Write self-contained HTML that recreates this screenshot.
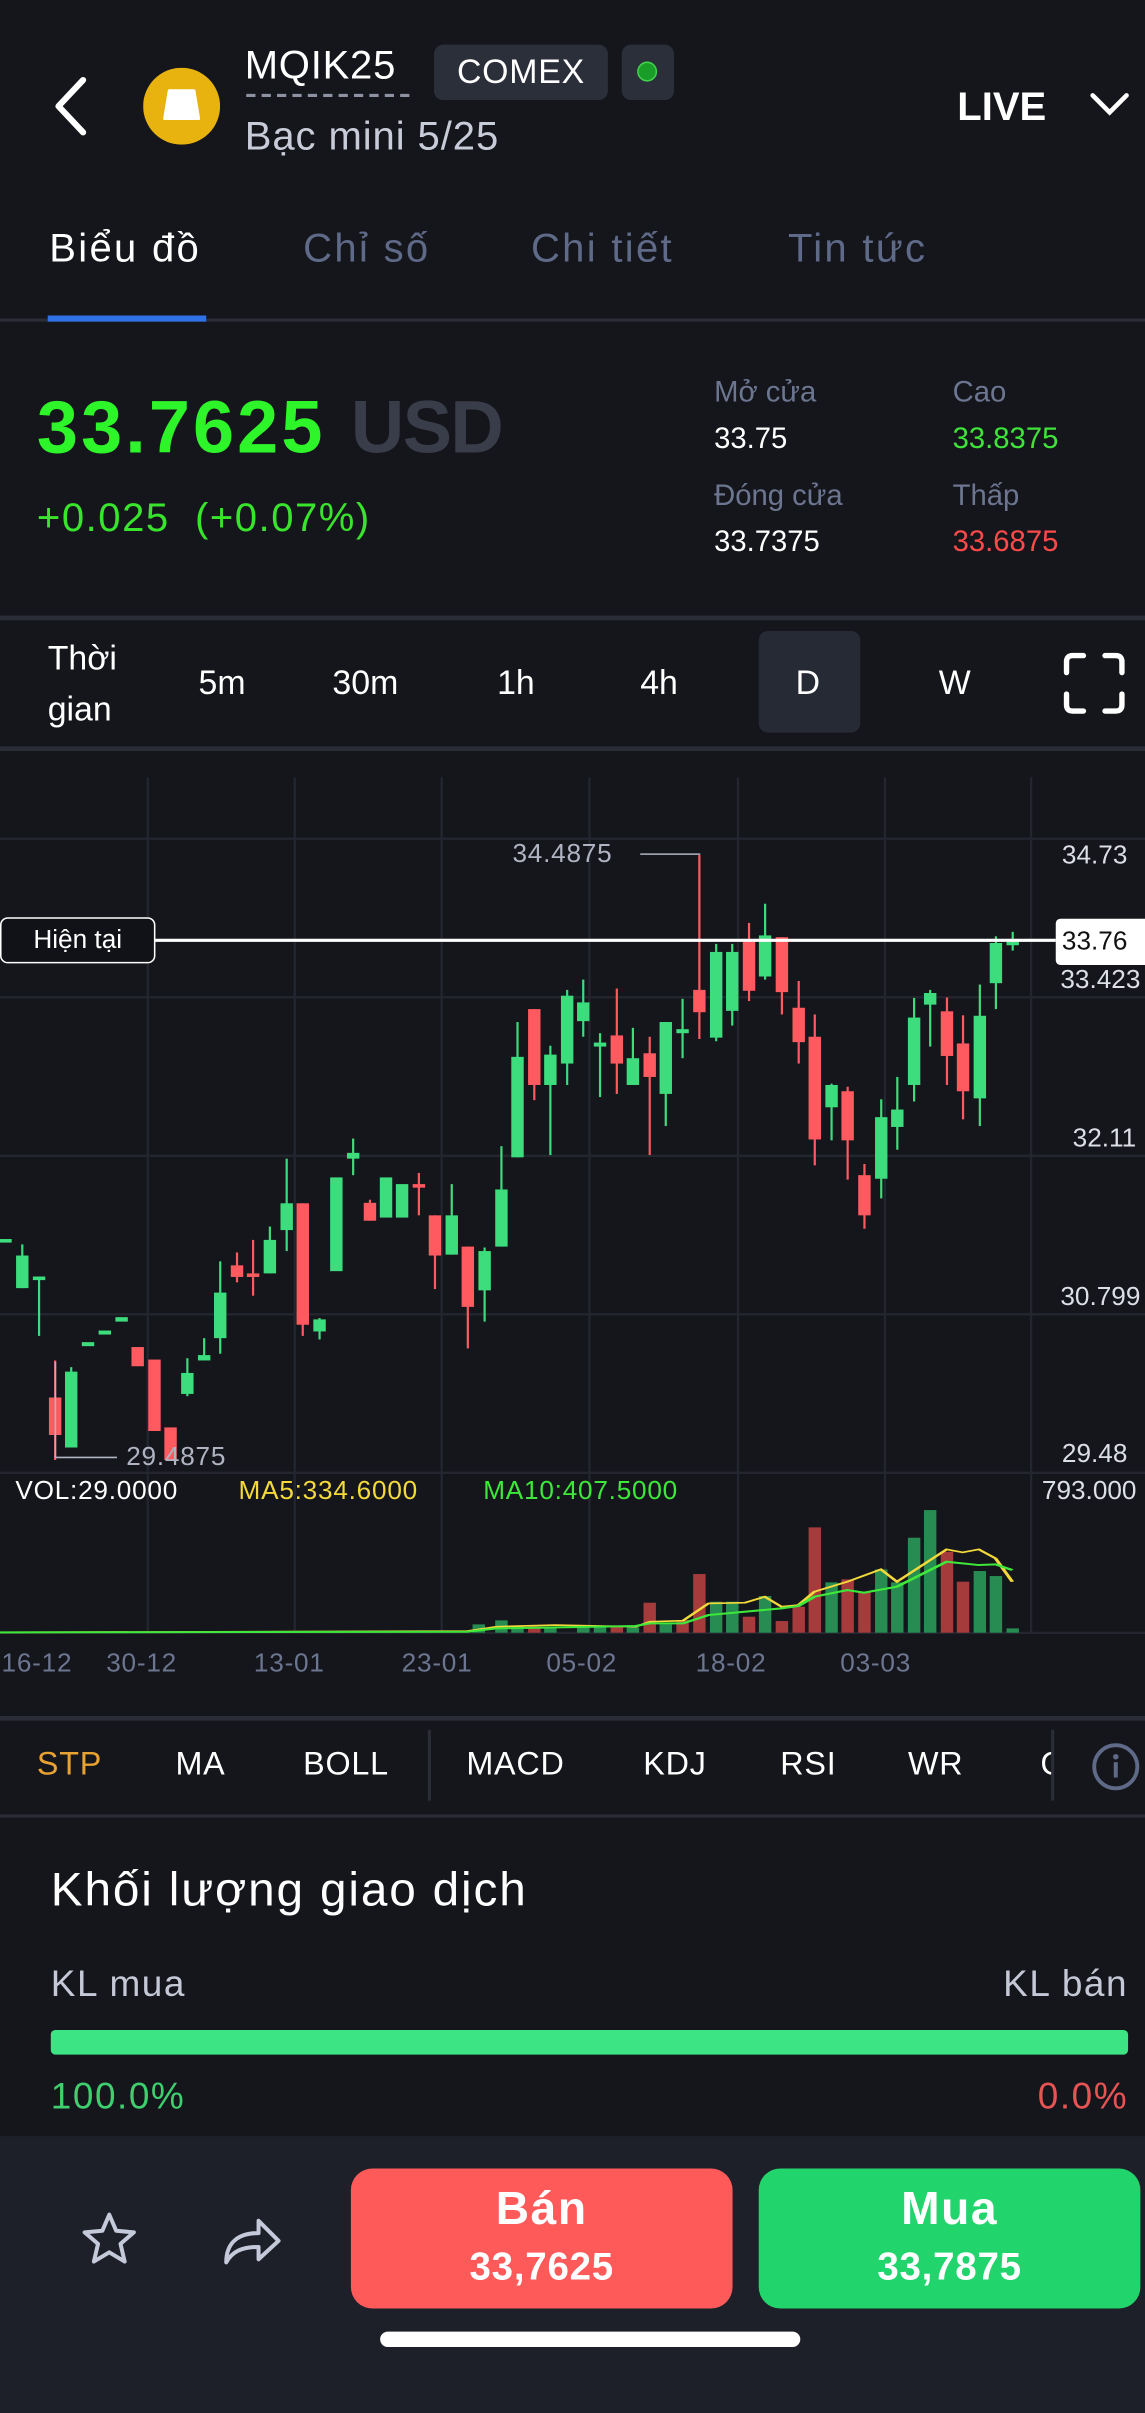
<!DOCTYPE html>
<html><head><meta charset="utf-8">
<style>
html,body{margin:0;padding:0;background:#15161c;width:1145px;height:2413px;overflow:hidden}
#p{position:absolute;left:0;top:0;width:744px;height:1568px;transform:scale(1.539);transform-origin:0 0;background:#15161c;font-family:"Liberation Sans",sans-serif;color:#fff}
.a{position:absolute;white-space:nowrap}
.hl{position:absolute;left:0;width:744px;background:#2a2d36}
.tf{position:absolute;top:431px;font-size:22px;color:#fff}
.ind{position:absolute;top:1135px;font-size:21px;color:#fff;letter-spacing:0.5px}
.pl{position:absolute;font-size:17px;color:#dcdfe6;left:690px}
.dt{position:absolute;top:1071px;font-size:17px;color:#6c7690;letter-spacing:0.5px}
.tab{position:absolute;top:146px;font-size:26px;letter-spacing:1.5px;color:#5e6a87}
</style></head><body><div id="p">

<!-- header -->
<svg class="a" style="left:30px;top:48px" width="32" height="42"><path d="M24 4 L8 21 L24 38" stroke="#fff" stroke-width="4" fill="none" stroke-linecap="round" stroke-linejoin="round"/></svg>
<svg class="a" style="left:93px;top:44px" width="50" height="50"><circle cx="25" cy="25" r="25" fill="#e8b30f"/><path d="M17 15 H33 L36 33 H14 Z" fill="#fff" stroke="#fff" stroke-width="2" stroke-linejoin="round"/></svg>
<div class="a" style="left:159px;top:27px;font-size:26px;letter-spacing:0.5px">MQIK25</div>
<div class="a" style="left:160px;top:61px;width:106px;border-top:2px dashed #8d92a3"></div>
<div class="a" style="left:282px;top:29px;width:113px;height:36px;background:#2b2f3a;border-radius:6px;font-size:22px;line-height:36px;text-align:center;letter-spacing:0.5px">COMEX</div>
<div class="a" style="left:404px;top:29px;width:34px;height:36px;background:#2b2f3a;border-radius:6px"><div style="position:absolute;left:10px;top:11px;width:11px;height:11px;border-radius:50%;background:#1a9d28;border:1.5px solid #3fd24a"></div></div>
<div class="a" style="left:159px;top:73px;font-size:26px;color:#c8cbd8;letter-spacing:0.6px">Bạc mini 5/25</div>
<div class="a" style="left:622px;top:54px;font-size:26px;font-weight:bold">LIVE</div>
<svg class="a" style="left:707px;top:58px" width="30" height="20"><path d="M3 4 L14 15 L25 4" stroke="#fff" stroke-width="3" fill="none" stroke-linecap="round"/></svg>

<!-- tabs -->
<div class="tab" style="left:32px;color:#fff">Biểu đồ</div>
<div class="tab" style="left:197px">Chỉ số</div>
<div class="tab" style="left:345px">Chi tiết</div>
<div class="tab" style="left:512px">Tin tức</div>
<div class="hl" style="top:207px;height:2px"></div>
<div class="a" style="left:31px;top:205px;width:103px;height:4px;background:#2f72e6"></div>

<!-- price -->
<div class="a" style="left:24px;top:251px;font-size:48px;font-weight:bold;color:#2ef52a;letter-spacing:2px">33.7625</div>
<div class="a" style="left:228px;top:251px;font-size:48px;font-weight:bold;color:#393c49;letter-spacing:-1px">USD</div>
<div class="a" style="left:24px;top:321px;font-size:26px;color:#38e42c;letter-spacing:1px">+0.025 &nbsp;(+0.07%)</div>
<div class="a" style="left:464px;top:245px;font-size:19px;color:#6c7690">Mở cửa</div>
<div class="a" style="left:464px;top:275px;font-size:19px">33.75</div>
<div class="a" style="left:619px;top:245px;font-size:19px;color:#6c7690">Cao</div>
<div class="a" style="left:619px;top:275px;font-size:19px;color:#3ee43a">33.8375</div>
<div class="a" style="left:464px;top:312px;font-size:19px;color:#6c7690">Đóng cửa</div>
<div class="a" style="left:464px;top:342px;font-size:19px">33.7375</div>
<div class="a" style="left:619px;top:312px;font-size:19px;color:#6c7690">Thấp</div>
<div class="a" style="left:619px;top:342px;font-size:19px;color:#ff4a4a">33.6875</div>
<div class="hl" style="top:400px;height:3px"></div>

<!-- timeframe -->
<div class="a" style="left:31px;top:411px;font-size:22px;line-height:33px">Thời<br>gian</div>
<div class="tf" style="left:129px">5m</div>
<div class="tf" style="left:216px">30m</div>
<div class="tf" style="left:323px">1h</div>
<div class="tf" style="left:416px">4h</div>
<div class="a" style="left:493px;top:410px;width:66px;height:66px;background:#262a35;border-radius:6px"></div>
<div class="tf" style="left:517px">D</div>
<div class="tf" style="left:610px">W</div>
<svg class="a" style="left:690px;top:423px" width="42" height="42"><path d="M3 14 V7 Q3 3 7 3 H14 M28 3 H35 Q39 3 39 7 V14 M39 28 V35 Q39 39 35 39 H28 M14 39 H7 Q3 39 3 35 V28" stroke="#fff" stroke-width="3.5" fill="none" stroke-linecap="round"/></svg>
<div class="hl" style="top:485px;height:3px"></div>

<!-- chart -->
<svg class="a" style="left:0;top:0" width="744" height="1120">
<g stroke="#23262f" stroke-width="1.5">
<line x1="96" y1="505" x2="96" y2="1061"/><line x1="191.5" y1="505" x2="191.5" y2="1061"/><line x1="287" y1="505" x2="287" y2="1061"/><line x1="383" y1="505" x2="383" y2="1061"/><line x1="479.5" y1="505" x2="479.5" y2="1061"/><line x1="575" y1="505" x2="575" y2="1061"/><line x1="670" y1="505" x2="670" y2="1061"/>
<line x1="0" y1="545" x2="744" y2="545"/><line x1="0" y1="648" x2="744" y2="648"/><line x1="0" y1="751" x2="744" y2="751"/><line x1="0" y1="854" x2="744" y2="854"/><line x1="0" y1="957" x2="744" y2="957"/><line x1="0" y1="1061" x2="744" y2="1061"/>
</g>
<g transform="matrix(0.4746,0,0,0.2901,0,493.8)">
<g fill="#3ddc7c">
<rect x="0" y="1073" width="16" height="8"/>
<rect x="29" y="1085" width="3" height="98"/><rect x="22" y="1110" width="17" height="73"/>
<rect x="52" y="1158" width="3" height="132"/><rect x="45" y="1157" width="17" height="8"/>
<rect x="96" y="1360" width="3" height="180"/><rect x="89" y="1370" width="17" height="170"/>
<rect x="112" y="1304" width="17" height="9"/><rect x="135" y="1278" width="17" height="9"/><rect x="158" y="1248" width="17" height="10"/>
<rect x="255" y="1340" width="3" height="85"/><rect x="248" y="1373" width="17" height="47"/>
<rect x="278" y="1295" width="3" height="50"/><rect x="271" y="1333" width="17" height="12"/>
<rect x="300" y="1123" width="3" height="207"/><rect x="293" y="1193" width="17" height="102"/>
<rect x="368" y="1045" width="3" height="105"/><rect x="361" y="1075" width="17" height="75"/>
<rect x="391" y="893" width="3" height="207"/><rect x="384" y="993" width="17" height="60"/>
<rect x="436" y="1250" width="3" height="48"/><rect x="429" y="1253" width="17" height="27"/>
<rect x="452" y="935" width="17" height="210"/>
<rect x="482" y="848" width="3" height="82"/><rect x="475" y="880" width="17" height="13"/>
<rect x="520" y="935" width="17" height="90"/><rect x="542" y="950" width="17" height="75"/>
<rect x="617" y="950" width="3" height="158"/><rect x="610" y="1020" width="17" height="88"/>
<rect x="662" y="1092" width="3" height="166"/><rect x="655" y="1100" width="17" height="88"/>
<rect x="685" y="865" width="3" height="225"/><rect x="678" y="962" width="17" height="128"/>
<rect x="707" y="587" width="3" height="303"/><rect x="700" y="665" width="17" height="225"/>
<rect x="752" y="640" width="3" height="245"/><rect x="745" y="660" width="17" height="68"/>
<rect x="775" y="515" width="3" height="213"/><rect x="768" y="528" width="17" height="152"/>
<rect x="797" y="492" width="3" height="128"/><rect x="790" y="543" width="17" height="42"/>
<rect x="820" y="612" width="3" height="143"/><rect x="813" y="633" width="17" height="9"/>
<rect x="865" y="600" width="3" height="128"/><rect x="858" y="668" width="17" height="60"/>
<rect x="910" y="587" width="3" height="233"/><rect x="903" y="587" width="17" height="161"/>
<rect x="933" y="535" width="3" height="133"/><rect x="926" y="603" width="17" height="9"/>
<rect x="979" y="412" width="3" height="218"/><rect x="972" y="430" width="17" height="192"/>
<rect x="1001" y="412" width="3" height="183"/><rect x="994" y="430" width="17" height="132"/>
<rect x="1046" y="322" width="3" height="170"/><rect x="1039" y="393" width="17" height="92"/>
<rect x="1137" y="725" width="3" height="127"/><rect x="1130" y="728" width="17" height="50"/>
<rect x="1205" y="760" width="3" height="222"/><rect x="1198" y="800" width="17" height="138"/>
<rect x="1227" y="710" width="3" height="163"/><rect x="1220" y="783" width="17" height="39"/>
<rect x="1250" y="533" width="3" height="232"/><rect x="1243" y="577" width="17" height="151"/>
<rect x="1272" y="515" width="3" height="127"/><rect x="1265" y="522" width="17" height="26"/>
<rect x="1340" y="503" width="3" height="317"/><rect x="1333" y="573" width="17" height="185"/>
<rect x="1362" y="395" width="3" height="163"/><rect x="1355" y="410" width="17" height="90"/>
<rect x="1385" y="385" width="3" height="42"/><rect x="1378" y="407" width="17" height="8"/>
</g>
<g fill="#ff5a5f">
<rect x="74" y="1345" width="3" height="223"/><rect x="67" y="1428" width="17" height="84"/>
<rect x="180" y="1315" width="17" height="43"/>
<rect x="203" y="1343" width="17" height="160"/>
<rect x="225" y="1495" width="17" height="73"/>
<rect x="323" y="1103" width="3" height="67"/><rect x="316" y="1132" width="17" height="26"/>
<rect x="345" y="1075" width="3" height="125"/><rect x="338" y="1150" width="17" height="8"/>
<rect x="413" y="993" width="3" height="297"/><rect x="406" y="993" width="17" height="272"/>
<rect x="505" y="985" width="3" height="47"/><rect x="498" y="992" width="17" height="40"/>
<rect x="572" y="925" width="3" height="95"/><rect x="565" y="950" width="17" height="8"/>
<rect x="594" y="1020" width="3" height="165"/><rect x="587" y="1020" width="17" height="90"/>
<rect x="639" y="1090" width="3" height="228"/><rect x="632" y="1090" width="17" height="135"/>
<rect x="730" y="558" width="3" height="204"/><rect x="723" y="558" width="17" height="170"/>
<rect x="843" y="512" width="3" height="236"/><rect x="836" y="617" width="17" height="63"/>
<rect x="888" y="620" width="3" height="265"/><rect x="881" y="657" width="17" height="53"/>
<rect x="956" y="213" width="3" height="412"/><rect x="949" y="515" width="17" height="50"/>
<rect x="1024" y="365" width="3" height="175"/><rect x="1017" y="405" width="17" height="112"/>
<rect x="1069" y="397" width="3" height="173"/><rect x="1062" y="397" width="17" height="123"/>
<rect x="1092" y="495" width="3" height="185"/><rect x="1085" y="555" width="17" height="77"/>
<rect x="1114" y="570" width="3" height="338"/><rect x="1107" y="620" width="17" height="230"/>
<rect x="1159" y="732" width="3" height="208"/><rect x="1152" y="742" width="17" height="110"/>
<rect x="1182" y="905" width="3" height="145"/><rect x="1175" y="930" width="17" height="90"/>
<rect x="1295" y="532" width="3" height="196"/><rect x="1288" y="563" width="17" height="100"/>
<rect x="1317" y="572" width="3" height="233"/><rect x="1310" y="635" width="17" height="107"/>
</g>
</g>
<!-- volume -->
<g transform="matrix(0.4746,0,0,0.2166,0,935.7)">
<g fill="#268c51">
<rect x="647" y="553" width="17" height="25"/><rect x="678" y="541" width="17" height="37"/><rect x="700" y="558" width="17" height="20"/><rect x="745" y="560" width="17" height="18"/><rect x="790" y="562" width="17" height="16"/><rect x="813" y="562" width="17" height="16"/><rect x="858" y="562" width="17" height="16"/><rect x="903" y="553" width="17" height="25"/><rect x="972" y="485" width="17" height="93"/><rect x="994" y="485" width="17" height="93"/><rect x="1039" y="468" width="17" height="110"/><rect x="1130" y="427" width="17" height="151"/><rect x="1198" y="388" width="17" height="190"/><rect x="1220" y="427" width="17" height="151"/><rect x="1243" y="293" width="17" height="285"/><rect x="1265" y="210" width="17" height="368"/><rect x="1333" y="393" width="17" height="185"/><rect x="1355" y="408" width="17" height="170"/><rect x="1378" y="565" width="17" height="13"/>
</g>
<g fill="#a63b3c">
<rect x="723" y="560" width="17" height="18"/><rect x="836" y="560" width="17" height="18"/><rect x="881" y="488" width="17" height="90"/><rect x="926" y="540" width="17" height="38"/><rect x="949" y="402" width="17" height="176"/><rect x="1017" y="530" width="17" height="48"/><rect x="1062" y="543" width="17" height="35"/><rect x="1085" y="500" width="17" height="78"/><rect x="1107" y="262" width="17" height="316"/><rect x="1152" y="418" width="17" height="160"/><rect x="1175" y="455" width="17" height="123"/><rect x="1288" y="335" width="17" height="243"/><rect x="1310" y="425" width="17" height="153"/>
</g>
<polyline fill="none" stroke="#f3d93a" stroke-width="5" points="0,577 640,573 680,560 760,555 870,560 890,545 935,542 970,490 1020,488 1047,470 1070,500 1093,495 1115,455 1160,425 1206,388 1228,425 1296,328 1318,337 1340,328 1363,355 1386,425"/>
<polyline fill="none" stroke="#3ee83a" stroke-width="6" points="0,577 640,575 680,565 870,558 890,550 935,550 970,525 1070,505 1093,498 1115,470 1160,450 1183,458 1228,440 1296,365 1340,375 1363,373 1386,390"/>
</g>
<polyline points="416,555 455,555" stroke="#b0b4c2" stroke-width="1" fill="none"/>
<polyline points="36,885 36,947 76,947" stroke="#b0b4c2" stroke-width="1" fill="none"/>
<line x1="101" y1="611" x2="686" y2="611" stroke="#fff" stroke-width="2"/>
</svg>
<div class="a" style="left:333px;top:545px;font-size:17px;color:#b0b4c2;letter-spacing:0.5px">34.4875</div>
<div class="a" style="left:82px;top:937px;font-size:17px;color:#b0b4c2;letter-spacing:0.5px">29.4875</div>
<div class="a" style="left:0;top:596px;width:99px;height:28px;border:1.5px solid #fff;border-radius:5px;background:#111217;font-size:17px;line-height:28px;text-align:center">Hiện tại</div>
<div class="pl" style="top:546px">34.73</div>
<div class="a" style="left:686px;top:597px;width:62px;height:30px;background:#fff;border-radius:3px;color:#111;font-size:17px;line-height:30px;padding-left:4px">33.76</div>
<div class="pl" style="top:627px;left:689px">33.423</div>
<div class="pl" style="top:730px;left:697px">32.11</div>
<div class="pl" style="top:833px;left:689px">30.799</div>
<div class="pl" style="top:935px">29.48</div>
<div class="pl" style="top:959px;left:677px">793.000</div>
<div class="a" style="left:10px;top:959px;font-size:17px;color:#fff;letter-spacing:0.5px">VOL:29.0000</div>
<div class="a" style="left:155px;top:959px;font-size:17px;color:#f3d93a;letter-spacing:0.5px">MA5:334.6000</div>
<div class="a" style="left:314px;top:959px;font-size:17px;color:#3ee83a;letter-spacing:0.5px">MA10:407.5000</div>
<div class="dt" style="left:1px">16-12</div>
<div class="dt" style="left:69px">30-12</div>
<div class="dt" style="left:165px">13-01</div>
<div class="dt" style="left:261px">23-01</div>
<div class="dt" style="left:355px">05-02</div>
<div class="dt" style="left:452px">18-02</div>
<div class="dt" style="left:546px">03-03</div>
<div class="hl" style="top:1115px;height:3px"></div>

<!-- indicators -->
<div class="ind" style="left:24px;color:#e8a232">STP</div>
<div class="ind" style="left:114px">MA</div>
<div class="ind" style="left:197px">BOLL</div>
<div class="a" style="left:278px;top:1124px;width:2px;height:46px;background:#2a2d36"></div>
<div class="ind" style="left:303px">MACD</div>
<div class="ind" style="left:418px">KDJ</div>
<div class="ind" style="left:507px">RSI</div>
<div class="ind" style="left:590px">WR</div>
<div class="a" style="left:676px;top:1135px;width:8px;overflow:hidden;font-size:21px">C</div>
<div class="a" style="left:683px;top:1124px;width:2px;height:46px;background:#2a2d36"></div>
<svg class="a" style="left:709px;top:1131px" width="34" height="34"><circle cx="16" cy="17" r="14" stroke="#5e6a87" stroke-width="2.5" fill="none"/><circle cx="16" cy="10.5" r="1.8" fill="#5e6a87"/><rect x="14.7" y="14" width="2.6" height="10" fill="#5e6a87"/></svg>
<div class="hl" style="top:1179px;height:2px"></div>

<!-- volume section -->
<div class="a" style="left:33px;top:1210px;font-size:31px;color:#fff;letter-spacing:1.2px">Khối lượng giao dịch</div>
<div class="a" style="left:33px;top:1276px;font-size:24px;color:#c5c8d6;letter-spacing:1px">KL mua</div>
<div class="a" style="right:11px;top:1276px;font-size:24px;color:#c5c8d6;letter-spacing:1px">KL bán</div>
<div class="a" style="left:33px;top:1319px;width:700px;height:16px;background:#3ce483;border-radius:3px"></div>
<div class="a" style="left:33px;top:1349px;font-size:24px;color:#3ecf6e;letter-spacing:1px">100.0%</div>
<div class="a" style="right:11px;top:1349px;font-size:24px;color:#e85454;letter-spacing:1px">0.0%</div>

<!-- bottom bar -->
<div class="a" style="left:0;top:1388px;width:744px;height:180px;background:#1d2029"></div>
<svg class="a" style="left:51px;top:1435px" width="40" height="40"><path d="M20 4 L24.5 14.5 L36 15.5 L27.3 23 L30 34.5 L20 28.5 L10 34.5 L12.7 23 L4 15.5 L15.5 14.5 Z" stroke="#c5cadb" stroke-width="2.6" fill="none" stroke-linejoin="round"/></svg>
<svg class="a" style="left:143px;top:1435px" width="44" height="40"><path d="M4 35 C4 22 12 16 25 16 V8 L38 21 L25 33 V25 C14 25 8 28 4 35 Z" stroke="#c5cadb" stroke-width="2.6" fill="none" stroke-linejoin="round"/></svg>
<div class="a" style="left:228px;top:1409px;width:248px;height:91px;background:#ff5a5a;border-radius:14px;text-align:center;font-weight:bold"><div style="font-size:30px;margin-top:10px;letter-spacing:1px">Bán</div><div style="font-size:25px;margin-top:6px;letter-spacing:0.5px">33,7625</div></div>
<div class="a" style="left:493px;top:1409px;width:248px;height:91px;background:#22d46c;border-radius:14px;text-align:center;font-weight:bold"><div style="font-size:30px;margin-top:10px;letter-spacing:1px">Mua</div><div style="font-size:25px;margin-top:6px;letter-spacing:0.5px">33,7875</div></div>
<div class="a" style="left:247px;top:1515px;width:273px;height:10px;background:#fff;border-radius:5px"></div>
</div></body></html>
